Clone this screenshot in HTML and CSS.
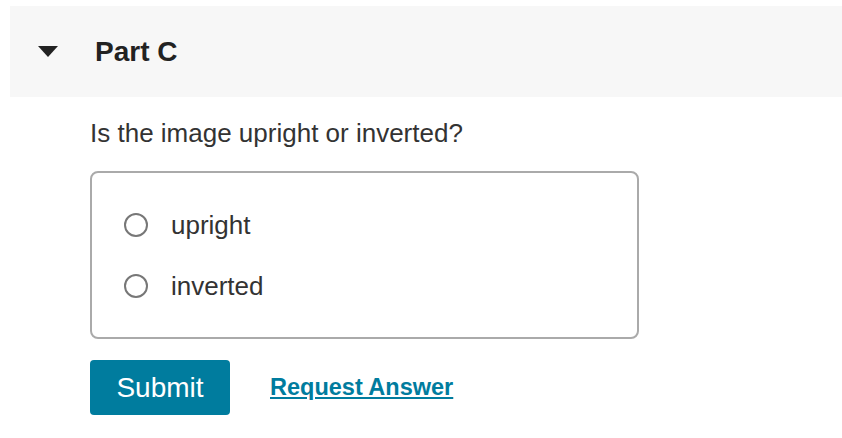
FILE: index.html
```html
<!DOCTYPE html>
<html lang="en">
<head>
  <meta charset="UTF-8" />
  <title>Part C</title>
  <link rel="stylesheet" href="styles.css">
</head>
<body>
  <div class="part-header">
    <span class="toggle-arrow"></span>
    <h2 class="part-title">Part C</h2>
  </div>

  <div class="part-body">
    <p class="question">Is the image upright or inverted?</p>

    <div class="choice-box">
      <label class="choice"><span class="radio"></span>upright</label>
      <label class="choice"><span class="radio"></span>inverted</label>
    </div>

    <div class="actions">
      <button class="submit-button">Submit</button>
      <a class="request-link" href="#">Request Answer</a>
    </div>
  </div>
</body>
</html>
```

FILE: styles.css
```css
body {
  margin: 0;
  font-family: "Liberation Sans", Arial, sans-serif;
  color: #333;
  background: #fff;
}
.part-header {
  margin: 6px 0 0 10px;
  height: 91px;
  background: #f7f7f7;
  display: flex;
  align-items: center;
}
.toggle-arrow {
  width: 0;
  height: 0;
  margin-left: 28px;
  border-left: 10px solid transparent;
  border-right: 10px solid transparent;
  border-top: 11px solid #222;
}
.part-title {
  margin: 0 0 0 37px;
  font-size: 28px;
  font-weight: bold;
  color: #222;
}
.part-body {
  padding-left: 90px;
}
.question {
  margin: 21px 0 0;
  font-size: 26px;
  line-height: 30px;
}
.choice-box {
  box-sizing: border-box;
  width: 549px;
  margin-top: 23px;
  border: 2px solid #aaa;
  border-radius: 8px;
  padding: 37px 0 36px 32px;
  display: flex;
  flex-direction: column;
  gap: 31px;
}
.choice {
  display: flex;
  align-items: center;
  font-size: 26px;
  line-height: 30px;
}
.radio {
  box-sizing: border-box;
  width: 24px;
  height: 24px;
  border: 2px solid #777;
  border-radius: 50%;
  margin-right: 23px;
}
.actions {
  margin-top: 21px;
  display: flex;
  align-items: center;
}
.submit-button {
  width: 140px;
  height: 55px;
  background: #007c9e;
  color: #fff;
  border: none;
  border-radius: 4px;
  font-family: inherit;
  font-size: 28px;
  cursor: pointer;
}
.request-link {
  margin-left: 40px;
  color: #007c9e;
  font-size: 23.5px;
  font-weight: bold;
}
```
